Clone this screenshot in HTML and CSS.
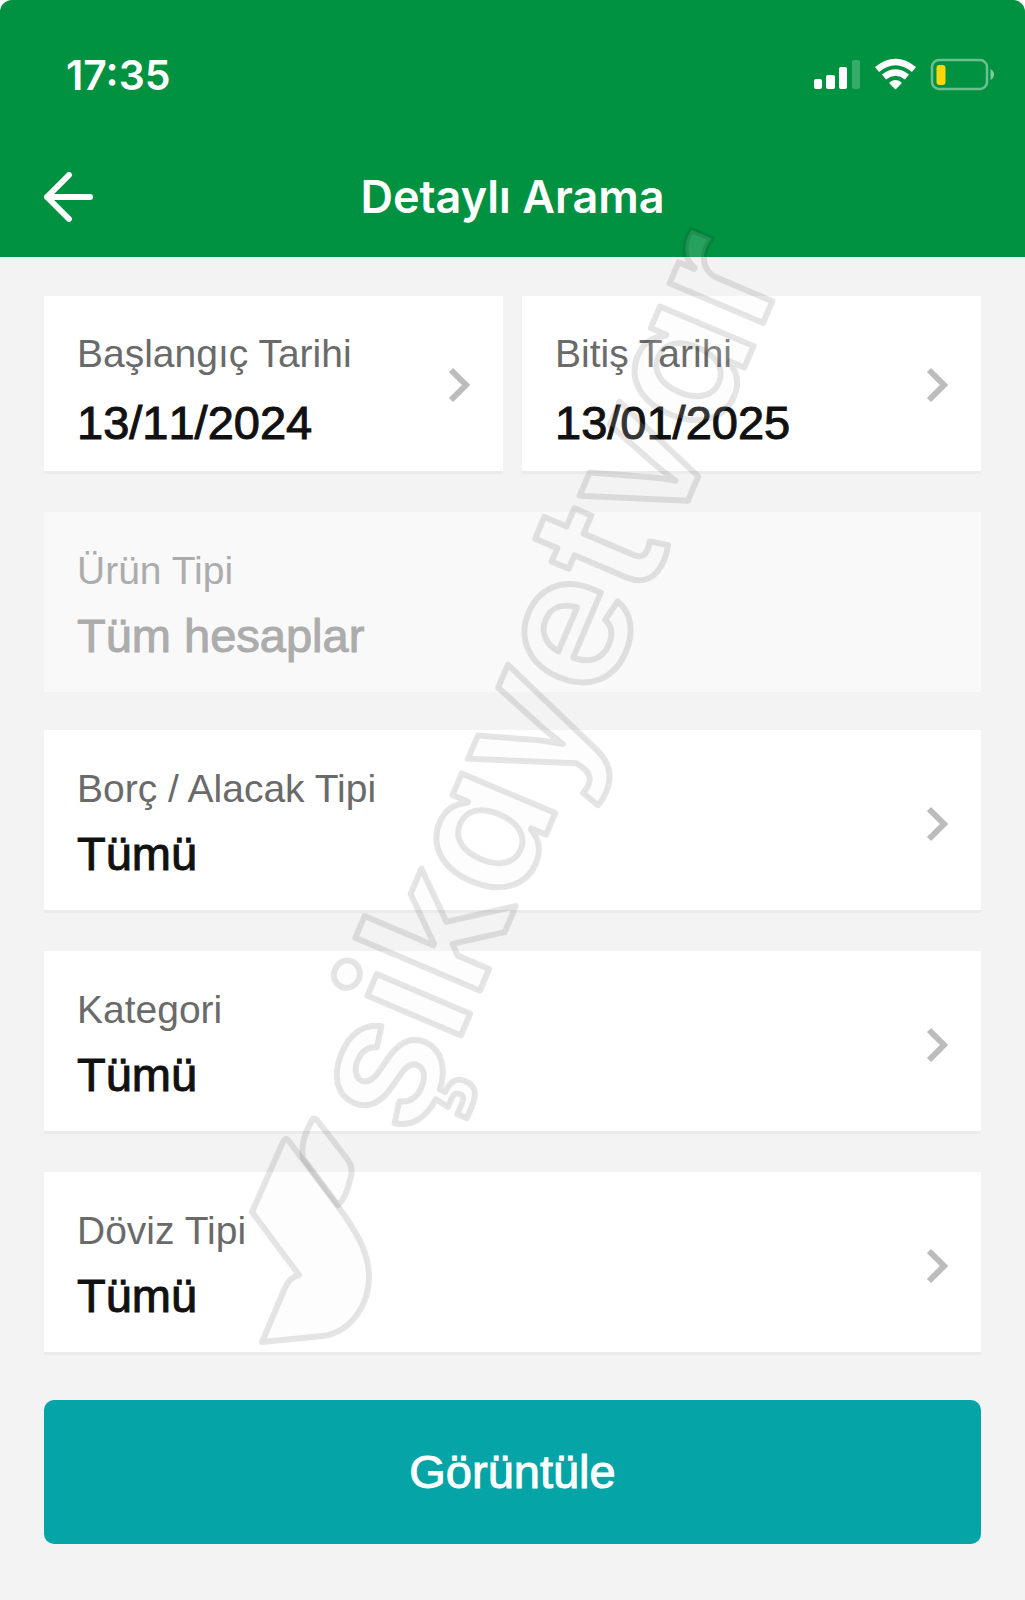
FILE: index.html
```html
<!DOCTYPE html>
<html lang="tr">
<head>
<meta charset="utf-8">
<meta name="viewport" content="width=device-width, initial-scale=1">
<title>Detaylı Arama</title>
<link rel="stylesheet" href="styles.css">
</head>
<body>
<div class="screen">
  <header class="header">
    <div class="status">
      <span class="time">17:35</span>
      <svg class="status-icons" viewBox="814 58 182 34" aria-hidden="true">
        <g fill="#fff">
          <rect x="814" y="79" width="8" height="10" rx="2"/>
          <rect x="826" y="75" width="9" height="14" rx="2"/>
          <rect x="839" y="67" width="8" height="22" rx="2"/>
          <rect x="852" y="60" width="8" height="29" rx="2" opacity=".22"/>
          <path d="M895.500 89.500 889.500 83.500Q889 82.500 890 82Q895.500 78 901 82Q902 82.500 901.500 83.500Z"/>
        </g>
        <g fill="none" stroke="#fff" stroke-width="6.500">
          <path d="M877 69.500Q895.500 54.500 914 69.500"/>
          <path d="M884 77Q895.500 68 907 77"/>
        </g>
        <rect x="932" y="60" width="55" height="29" rx="7" fill="none" stroke="#fff" stroke-opacity=".42" stroke-width="2.500"/>
        <path d="M990.500 69Q994 71 994 74.500T990.500 80Z" fill="#fff" opacity=".5"/>
        <rect x="936.500" y="65" width="9" height="20" rx="3" fill="#ffd60a"/>
      </svg>
    </div>
    <nav class="nav">
      <button class="back" type="button" aria-label="Geri">
        <svg viewBox="0 0 50 50" aria-hidden="true"><path d="M25 3 3 25 25 47M3 25H46"/></svg>
      </button>
      <h1 class="title">Detaylı Arama</h1>
    </nav>
  </header>

  <main class="form">
    <div class="dates">
      <button class="field field-date" type="button">
        <span class="texts"><span class="label">Başlangıç Tarihi</span><span class="value">13/11/2024</span></span>
        <svg class="chevron" viewBox="0 0 22 36" aria-hidden="true"><path d="M3 3 18 18 3 33"/></svg>
      </button>
      <button class="field field-date" type="button">
        <span class="texts"><span class="label">Bitiş Tarihi</span><span class="value">13/01/2025</span></span>
        <svg class="chevron" viewBox="0 0 22 36" aria-hidden="true"><path d="M3 3 18 18 3 33"/></svg>
      </button>
    </div>
    <button class="field" type="button" disabled>
      <span class="texts"><span class="label">Ürün Tipi</span><span class="value">Tüm hesaplar</span></span>
    </button>
    <button class="field" type="button">
      <span class="texts"><span class="label">Borç / Alacak Tipi</span><span class="value">Tümü</span></span>
      <svg class="chevron" viewBox="0 0 22 36" aria-hidden="true"><path d="M3 3 18 18 3 33"/></svg>
    </button>
    <button class="field" type="button">
      <span class="texts"><span class="label">Kategori</span><span class="value">Tümü</span></span>
      <svg class="chevron" viewBox="0 0 22 36" aria-hidden="true"><path d="M3 3 18 18 3 33"/></svg>
    </button>
    <button class="field" type="button">
      <span class="texts"><span class="label">Döviz Tipi</span><span class="value">Tümü</span></span>
      <svg class="chevron" viewBox="0 0 22 36" aria-hidden="true"><path d="M3 3 18 18 3 33"/></svg>
    </button>
    <button class="submit" type="button">Görüntüle</button>
  </main>

  <svg class="watermark" viewBox="0 0 1025 1600" aria-hidden="true">
    <path d="M288 1140 345 1216C360 1238 369 1256 369 1277C369 1305 351 1332 323 1336L262 1342 284 1290Q289 1277 299 1275L252 1212 283 1142Q285 1137 288 1140Z"/>
    <path d="M317 1120 348 1160Q354 1169 350 1180Q346 1198 338 1205L303 1158Q300 1142 312 1120Q314 1117 317 1120Z"/>
    <text class="brand" transform="translate(416 1141) rotate(-67)">şikayetvar</text>
  </svg>
</div>
</body>
</html>
```
FILE: styles.css
```css
* { box-sizing: border-box; }

body {
  margin: 0;
  background: #fff;
  font-family: "Liberation Sans", Arial, sans-serif;
}

button {
  margin: 0;
  border: 0;
  font: inherit;
  text-align: left;
}

.screen {
  position: relative;
  min-height: 100vh;
  border-radius: 12px 12px 0 0;
  background: #f3f3f3;
  overflow: hidden;
}

.header {
  padding: 49px 0 32px;
  background: #009241;
  color: #fff;
  font-family: Inter, sans-serif;
  font-weight: 600;
}

.status {
  display: flex;
  align-items: center;
  justify-content: space-between;
  padding: 0 29px 0 66px;
}

.time { font-size: 41px; line-height: 52px; }
.status-icons { width: 182px; height: 34px; }

.nav {
  display: grid;
  grid-template-columns: 1fr auto 1fr;
  align-items: center;
  padding: 68px 44px 0;
}

.back {
  width: 50px;
  height: 50px;
  padding: 0;
  background: none;
}

.back svg { display: block; }

.back path {
  fill: none;
  stroke: #fff;
  stroke-width: 6;
  stroke-linecap: round;
  stroke-linejoin: round;
}

.title {
  margin: 0;
  font-size: 45px;
  line-height: 56px;
  font-weight: 600;
}

.form {
  display: flex;
  flex-direction: column;
  gap: 38px;
  padding: 39px 44px 56px;
}

.dates {
  display: grid;
  grid-template-columns: 1fr 1fr;
  gap: 19px;
}

.field {
  display: flex;
  align-items: center;
  justify-content: space-between;
  padding: 36px 33px 28px;
  border-bottom: 3px solid #ebebeb;
  background: #fff;
  color: #111;
}

.texts {
  display: flex;
  flex-direction: column;
  gap: 14px;
}

.label {
  color: #6a6a6a;
  font-size: 39px;
  line-height: 46px;
}

.value {
  font-size: 47px;
  line-height: 56px;
  -webkit-text-stroke: 1px currentColor;
}

.chevron {
  width: 22px;
  height: 36px;
}

.chevron path {
  fill: none;
  stroke: #bcbcbc;
  stroke-width: 6;
}

.field-date { padding: 35px 33px 20px; }
.field-date .texts { gap: 18px; }
.field-date .value { font-kerning: none; }
.field-date .chevron { margin-bottom: 12px; }

.field:disabled {
  border-bottom: 0;
  background: #f9f9f9;
  color: #acacac;
}

.field:disabled .label { color: #acacac; }

.submit {
  margin-top: 7px;
  padding: 44px;
  border-radius: 10px;
  background: #04a4a7;
  color: #fff;
  font-size: 47px;
  line-height: 56px;
  text-align: center;
  -webkit-text-stroke: 1px currentColor;
}

.watermark {
  position: absolute;
  top: 0;
  left: 0;
  width: 100%;
  pointer-events: none;
  fill: rgba(240, 240, 240, .16);
  stroke: rgba(0, 0, 0, .1);
  stroke-width: 6;
  stroke-linejoin: round;
}

.brand {
  font-family: Inter, sans-serif;
  font-size: 186px;
  font-weight: 600;
  font-feature-settings: "cv11";
}
```
